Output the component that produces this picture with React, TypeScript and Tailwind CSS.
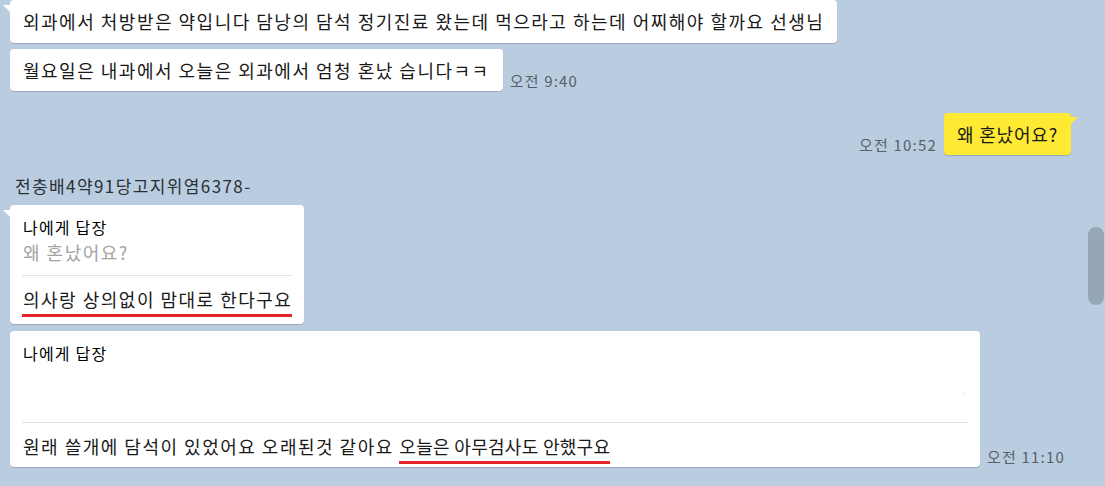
import React from "react";

const font = { fontFamily: '"Noto Sans CJK KR", "Noto Sans", sans-serif' };

function TailLeft() {
  return (
    <span className="absolute left-[-7px] top-[5px] h-0 w-0 border-t-[7px] border-l-[7px] border-t-white border-l-transparent" />
  );
}

function Time({ children }: { children: React.ReactNode }) {
  return (
    <span className="ml-[7px] mb-0 shrink-0 text-[15px] leading-[20px] tracking-[1.2px] text-[#55606b]">
      {children}
    </span>
  );
}

export default function App() {
  return (
    <div
      className="relative h-[486px] w-[1105px] overflow-hidden bg-[#bacde0] text-[#191919]"
      style={font}
    >
      <div className="flex flex-col pl-[10px] pr-[34px]">
        {/* bubble 1 */}
        <div className="flex">
          <div className="relative rounded-[4px] bg-white px-[13px] py-[10px] text-[18px] leading-[23px] tracking-[1.5px] shadow-[0_1px_1px_rgba(0,0,0,0.18)]">
            <TailLeft />
            외과에서 처방받은 약입니다 담낭의 담석 정기진료 왔는데 먹으라고 하는데 어찌해야 할까요 선생님
          </div>
        </div>

        {/* bubble 2 */}
        <div className="mt-[6px] flex items-end">
          <div className="rounded-[4px] bg-white px-[13px] py-[10px] text-[18px] leading-[22px] tracking-[1.5px] shadow-[0_1px_1px_rgba(0,0,0,0.18)]">
            월요일은 내과에서 오늘은 외과에서 엄청 혼났 습니다ㅋㅋ
          </div>
          <Time>오전 9:40</Time>
        </div>

        {/* my bubble */}
        <div className="mt-[22px] flex items-end justify-end">
          <span className="mr-[7px] mb-0 text-[15px] leading-[20px] tracking-[1.2px] text-[#55606b]">
            오전 10:52
          </span>
          <div className="relative rounded-[4px] bg-[#fee933] px-[13px] py-[10px] text-[18px] leading-[22px] tracking-[0.8px] shadow-[0_1px_1px_rgba(0,0,0,0.18)]">
            <span className="absolute right-[-7px] top-[4px] h-0 w-0 border-t-[7px] border-r-[7px] border-t-[#fee933] border-r-transparent" />
            왜 혼났어요?
          </div>
        </div>

        {/* name */}
        <div className="mt-[20px] pl-[5px] text-[17px] leading-[22px] tracking-[1.4px] text-[#2a2f35]">
          전충배4약91당고지위염6378-
        </div>

        {/* reply 1 */}
        <div className="mt-[8px] flex">
          <div className="relative rounded-[4px] bg-white px-[12px] pt-[11px] pb-[7px] shadow-[0_1px_1px_rgba(0,0,0,0.18)]">
            <TailLeft />
            <div className="pl-[1px] text-[16px] leading-[22px] tracking-[1.2px] text-black">나에게 답장</div>
            <div className="mt-[3px] pl-[1px] text-[18px] leading-[22px] tracking-[1.5px] text-[#a3a3a3]">
              왜 혼났어요?
            </div>
            <div className="mt-[12px] h-px bg-[#e3e3e3]" />
            <div className="mt-[12px] text-[18px] leading-[22px] tracking-[1.5px]">
              <span className="inline-block border-b-[3px] border-[#e5242a] pb-[4px] pl-[1px]">
                의사랑 상의없이 맘대로 한다구요
              </span>
            </div>
          </div>
        </div>

        {/* reply 2 */}
        <div className="mt-[7px] flex items-end">
          <div className="relative w-[970px] rounded-[4px] bg-white px-[12px] pt-[11px] pb-[3px] shadow-[0_1px_1px_rgba(0,0,0,0.18)]">
            <div className="pl-[1px] text-[16px] leading-[22px] tracking-[1.2px] text-black">나에게 답장</div>
            <div className="flex h-[58px] items-center justify-end pr-[4px]">
              <span className="h-px w-px bg-[#bbbbbb]" />
            </div>
            <div className="h-px bg-[#e3e3e3]" />
            <div className="mt-[12px] pl-[1px] text-[18px] leading-[22px] tracking-[1.5px]">
              원래 쓸개에 담석이 있었어요 오래된것 같아요{" "}
              <span className="inline-block border-b-[3px] border-[#e5242a] pb-[4px] tracking-[0.3px]">
                오늘은 아무검사도 안했구요
              </span>
            </div>
          </div>
          <Time>오전 11:10</Time>
        </div>
      </div>

      {/* scrollbar */}
      <div className="absolute left-[1088px] top-[227px] h-[78px] w-[16px] rounded-full bg-[#95a6b7]" />
    </div>
  );
}
